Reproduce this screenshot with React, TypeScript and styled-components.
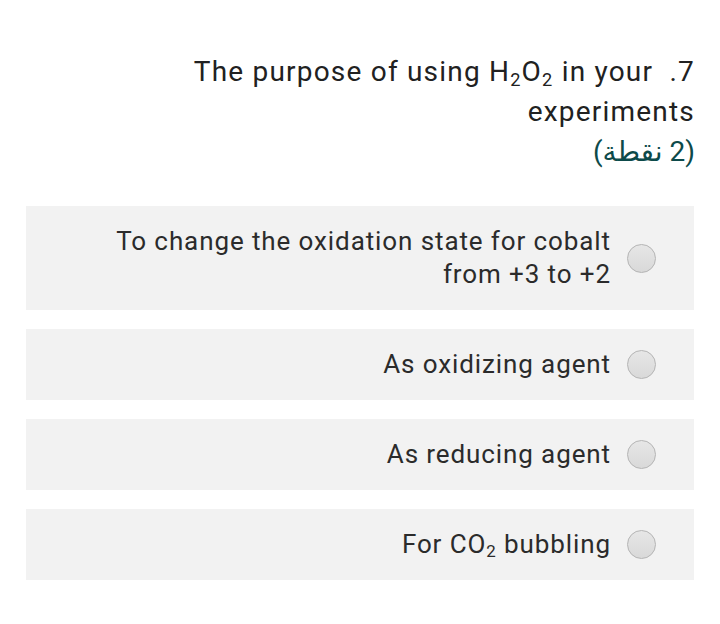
import React from "react";
import styled, { createGlobalStyle } from "styled-components";

const GlobalStyle = createGlobalStyle`
  html, body {
    margin: 0;
    padding: 0;
    background: #ffffff;
  }
  body {
    font-family: Roboto, "Noto Sans", sans-serif;
  }
`;

const Page = styled.div`
  width: 720px;
  min-height: 624px;
  box-sizing: border-box;
  padding: 52px 26px 0 26px;
  display: flex;
  flex-direction: column;
`;

const Question = styled.div`
  margin-right: -1px;
  text-align: right;
  font-size: 28px;
  line-height: 40px;
  letter-spacing: 1.2px;
  color: #212121;
  margin-bottom: 34px;
`;

const Points = styled.div`
  direction: rtl;
  display: flex;
  justify-content: flex-start;
  color: #0d4a4a;
  font-family: Roboto, "Noto Sans", "DejaVu Sans", sans-serif;
`;

const Sub = styled.sub`
  font-size: 0.65em;
  line-height: 0;
  vertical-align: -0.25em;
`;

const Options = styled.div`
  display: flex;
  flex-direction: column;
  gap: 19px;
`;

const OptionRow = styled.label`
  display: flex;
  align-items: center;
  justify-content: flex-end;
  gap: 16px;
  background: #f2f2f2;
  padding: 19px 38px 19px 20px;
`;

const OptionText = styled.span`
  text-align: right;
  font-size: 26px;
  line-height: 33px;
  letter-spacing: 0.9px;
  color: #2b2b2b;
`;

const Radio = styled.span`
  flex: none;
  width: 27px;
  height: 27px;
  border-radius: 50%;
  border: 1px solid #b4b4b4;
  background: linear-gradient(#e6e6e6, #d9d9d9);
`;

type OptionProps = {
  children: React.ReactNode;
};

function Option({ children }: OptionProps) {
  return (
    <OptionRow>
      <OptionText>{children}</OptionText>
      <Radio />
    </OptionRow>
  );
}

export default function App() {
  return (
    <>
      <GlobalStyle />
      <Page>
        <Question>
          The purpose of using H<Sub>2</Sub>O<Sub>2</Sub> in your&nbsp; .7
          <br />
          experiments
          <Points dir="rtl">(2 نقطة)</Points>
        </Question>
        <Options>
          <Option>
            To change the oxidation state for cobalt
            <br />
            from +3 to +2
          </Option>
          <Option>As oxidizing agent</Option>
          <Option>As reducing agent</Option>
          <Option>
            For CO<Sub>2</Sub> bubbling
          </Option>
        </Options>
      </Page>
    </>
  );
}
